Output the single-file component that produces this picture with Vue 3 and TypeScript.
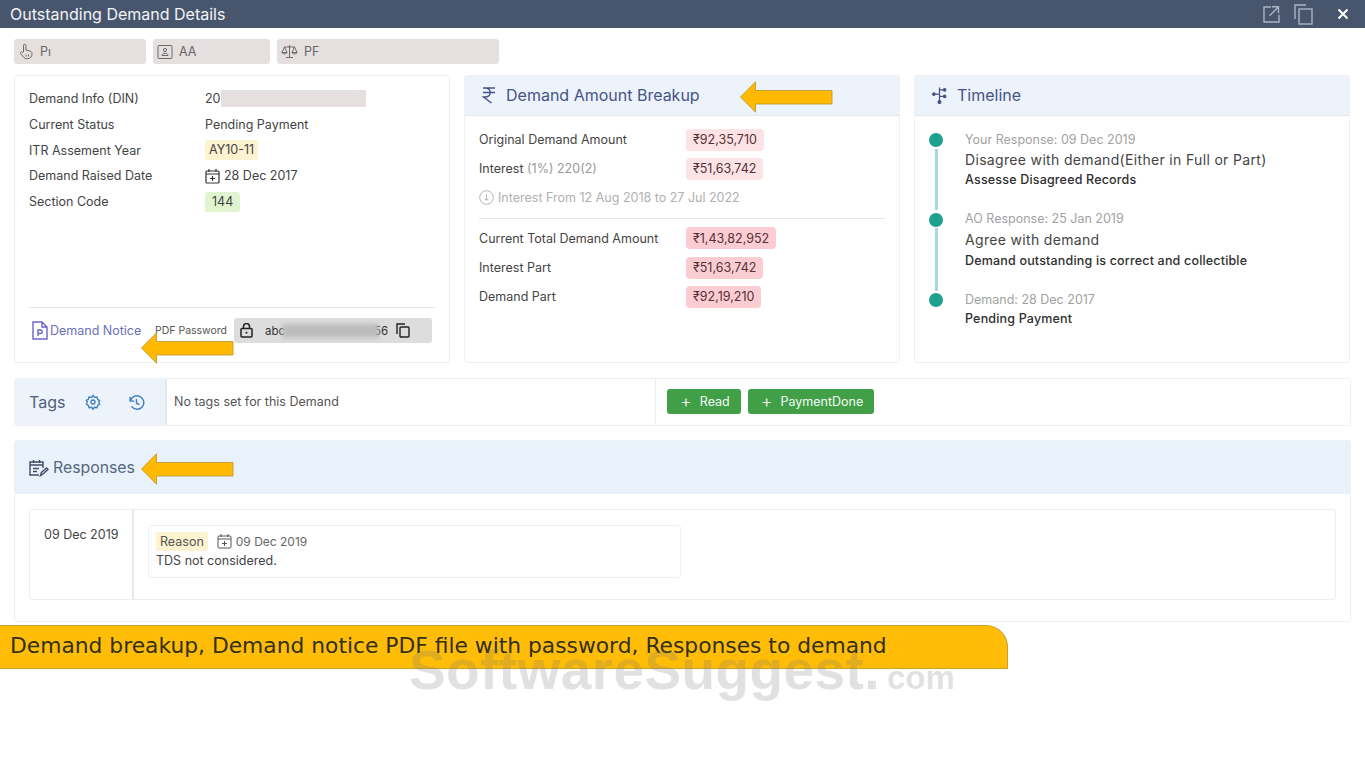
<script setup lang="ts">
const infoRows = [
  { label: "Demand Info (DIN)", kind: "din", value: "20" },
  { label: "Current Status", kind: "text", value: "Pending Payment" },
  { label: "ITR Assement Year", kind: "ay", value: "AY10-11" },
  { label: "Demand Raised Date", kind: "date", value: "28 Dec 2017" },
  { label: "Section Code", kind: "code", value: "144" },
];

const breakupTop = [
  { label: "Original Demand Amount", note: "", value: "₹92,35,710" },
  { label: "Interest", note: "(1%) 220(2)", value: "₹51,63,742" },
];

const breakupBottom = [
  { label: "Current Total Demand Amount", value: "₹1,43,82,952" },
  { label: "Interest Part", value: "₹51,63,742" },
  { label: "Demand Part", value: "₹92,19,210" },
];

const arrows = [
  { x: 740, y: 81 },
  { x: 141, y: 332 },
  { x: 141, y: 453 },
];
</script>

<template>
  <div class="page">
    <header class="titlebar">
      <span class="title">Outstanding Demand Details</span>
      <div class="win-icons">
        <svg width="20" height="20" viewBox="0 0 20 20" fill="none" stroke="#aab4c2" stroke-width="1.4">
          <path d="M10 3H3v15h15v-7M11 2.800h6.500v6.500M17.300 3L8.500 11.800" />
        </svg>
        <svg width="20" height="22" viewBox="0 0 20 22" fill="none" stroke="#aab4c2" stroke-width="1.4">
          <path d="M2 16V2h11" />
          <rect x="6" y="6" width="13" height="15" />
        </svg>
        <svg class="close" width="12" height="12" viewBox="0 0 12 12" stroke="#ffffff" stroke-width="2">
          <path d="M1.500 1.500l9 9M10.500 1.500l-9 9" />
        </svg>
      </div>
    </header>

    <div class="chips">
      <div class="chip chip-a">
        <svg width="16" height="17" viewBox="0 0 16 17" fill="none" stroke="#6a6a6a" stroke-width="1">
          <path d="M5.500 9V2.500a1.200 1.200 0 0 1 2.400 0V7l4.300 1.200c1.200.4 1.800 1.300 1.800 2.500 0 2.800-1.500 5-4.500 5-2.500 0-3.500-.8-4.700-2.500L2.500 10.500c-.6-1 .8-2 1.600-1.200z" />
          <path d="M8 11.500v2M10.500 11.500v2" />
        </svg>
        <span>Pı</span>
      </div>
      <div class="chip chip-b">
        <svg width="16" height="16" viewBox="0 0 16 16" fill="none" stroke="#6a6a6a" stroke-width="1">
          <rect x="1" y="1.500" width="14" height="13" rx="1" />
          <circle cx="8" cy="6" r="1.600" />
          <path d="M5 11.500c0-3 6-3 6 0z" />
        </svg>
        <span>AA</span>
      </div>
      <div class="chip chip-c">
        <svg width="17" height="15" viewBox="0 0 17 15" fill="none" stroke="#6a6a6a" stroke-width="1">
          <path d="M8.500 1v12M5 13.500h7M3 3h11M3.500 3L1 8.500c.5 2 4.500 2 5 0zM13.500 3L11 8.500c.5 2 4.500 2 5 0zM1 8.500h5M11 8.500h5" />
        </svg>
        <span>PF</span>
      </div>
    </div>

    <div class="cards">
      <section class="card info-card">
        <div class="info-rows">
          <div v-for="row in infoRows" :key="row.label" class="info-row">
            <span class="info-label">{{ row.label }}</span>
            <span v-if="row.kind === 'din'" class="din">
              {{ row.value }}<i class="redact"></i>
            </span>
            <span v-else-if="row.kind === 'ay'" class="pill pill-yellow">{{ row.value }}</span>
            <span v-else-if="row.kind === 'code'" class="pill pill-green">{{ row.value }}</span>
            <span v-else-if="row.kind === 'date'" class="date">
              <svg width="15" height="16" viewBox="0 0 15 16" fill="none" stroke="#333" stroke-width="1.200">
                <rect x="1" y="3" width="13" height="12" rx="1" />
                <path d="M1 6h13M4 1v3M11 1v3M7.500 8v5M5 10.500h5" />
              </svg>
              {{ row.value }}
            </span>
            <span v-else>{{ row.value }}</span>
          </div>
        </div>
        <div class="notice-row">
          <a class="notice-link">
            <svg width="16" height="19" viewBox="0 0 16 19" fill="none" stroke="#6c63c7" stroke-width="1.400">
              <path d="M1 1h9l5 5v12H1zM10 1v5h5" />
              <path d="M6 15V9h2.500a1.600 1.600 0 0 1 0 3.500H6" />
            </svg>
            Demand Notice
          </a>
          <span class="pdf-label">PDF Password</span>
          <div class="password">
            <svg width="13" height="15" viewBox="0 0 13 15" fill="none" stroke="#222" stroke-width="1.500">
              <rect x="1" y="5.500" width="11" height="8.500" rx="1" />
              <path d="M3.500 5.500V3.500a3 3 0 0 1 6 0v2" />
              <circle cx="6.500" cy="9.800" r="1" fill="#222" stroke="none" />
            </svg>
            <span class="pw-text">abc<i class="pw-blur"></i>56</span>
            <svg width="14" height="15" viewBox="0 0 14 15" fill="none" stroke="#222" stroke-width="1.400">
              <path d="M1 11V1h8" />
              <rect x="4" y="4" width="9" height="10" rx="1" />
            </svg>
          </div>
        </div>
      </section>

      <section class="card">
        <div class="card-head">
          <svg width="14" height="18" viewBox="0 0 14 18" fill="none" stroke="#46538a" stroke-width="1.500">
            <path d="M1 2h12M1 6.500h12M3 2c7 0 7 9 0 9H1.500l8 6" />
          </svg>
          <span>Demand Amount Breakup</span>
        </div>
        <div class="breakup">
          <div v-for="row in breakupTop" :key="row.label" class="amount-row">
            <span class="amount-label">{{ row.label }} <em v-if="row.note">{{ row.note }}</em></span>
            <span class="amount amount-light">{{ row.value }}</span>
          </div>
          <div class="interest-note">
            <svg width="15" height="15" viewBox="0 0 15 15" fill="none" stroke="#b5b5b5" stroke-width="1">
              <circle cx="7.500" cy="7.500" r="6.800" />
              <path d="M7.500 4v6M5.500 8.500l2 2 2-2" />
            </svg>
            Interest From 12 Aug 2018 to 27 Jul 2022
          </div>
          <hr class="rule" />
          <div v-for="row in breakupBottom" :key="row.label" class="amount-row">
            <span class="amount-label">{{ row.label }}</span>
            <span class="amount amount-dark">{{ row.value }}</span>
          </div>
        </div>
      </section>

      <section class="card">
        <div class="card-head">
          <svg width="15" height="19" viewBox="0 0 16 19" fill="none" stroke="#46538a" stroke-width="1.300">
            <path d="M8 1v16M1.500 8H8M8 3.500h5M8 10.500h5" />
            <circle cx="2" cy="8" r="1.300" fill="#46538a" />
            <circle cx="13.500" cy="3.500" r="1.300" fill="#46538a" />
            <circle cx="13.500" cy="10.500" r="1.300" fill="#46538a" />
            <circle cx="8" cy="16.500" r="1.500" fill="#46538a" />
          </svg>
          <span>Timeline</span>
        </div>
        <div class="timeline">
          <div class="tl-item tl-line">
            <span class="dot"></span>
            <div>
              <div class="tl-when">Your Response: 09 Dec 2019</div>
              <div class="tl-main">Disagree with demand(Either in Full or Part)</div>
              <div class="tl-sub">Assesse Disagreed Records</div>
            </div>
          </div>
          <div class="tl-item tl-line">
            <span class="dot"></span>
            <div>
              <div class="tl-when">AO Response: 25 Jan 2019</div>
              <div class="tl-main">Agree with demand</div>
              <div class="tl-sub">Demand outstanding is correct and collectible</div>
            </div>
          </div>
          <div class="tl-item">
            <span class="dot"></span>
            <div>
              <div class="tl-when">Demand: 28 Dec 2017</div>
              <div class="tl-sub tl-sub-last">Pending Payment</div>
            </div>
          </div>
        </div>
      </section>
    </div>

    <section class="tags">
      <div class="tags-head">
        <span class="tags-title">Tags</span>
        <svg width="16" height="16" viewBox="0 0 24 24" fill="none" stroke="#3f7fc4" stroke-width="2">
          <circle cx="12" cy="12" r="3" />
          <path d="M12 2l2 3 4-.5 1 3.500 3 2-1.500 2.500 1.500 2.500-3 2-1 3.500-4-.5-2 3-2-3-4 .5-1-3.500-3-2L3.500 12 2 9.500l3-1.500 1-3.500 4 .5z" />
        </svg>
        <svg class="hist" width="17" height="17" viewBox="0 0 24 24" fill="none" stroke="#3f7fc4" stroke-width="2">
          <path d="M3 4v6h6M3.500 10A9.500 9.500 0 1 1 5 17.500M12 7v6l4 2" />
        </svg>
      </div>
      <div class="tags-empty">No tags set for this Demand</div>
      <div class="tags-actions">
        <button class="add-btn"><span class="plus">+</span>Read</button>
        <button class="add-btn"><span class="plus">+</span>PaymentDone</button>
      </div>
    </section>

    <section class="responses">
      <div class="responses-head">
        <svg width="20" height="18" viewBox="0 0 20 18" fill="none" stroke="#3d4d66" stroke-width="1.400">
          <path d="M14 9V3H1v13h9M1 6h13M4.500 1v3M10.500 1v3M4 9.500h6M4 12.500h4" />
          <path d="M11.500 16.500l1-3 5-4.500 1.500 1.500-5 4.500z" />
        </svg>
        <span>Responses</span>
      </div>
      <div class="responses-body">
        <div class="resp-box">
          <div class="resp-date">09 Dec 2019</div>
          <div class="resp-main">
            <div class="reason-card">
              <div class="reason-top">
                <span class="reason-tag">Reason</span>
                <svg width="15" height="16" viewBox="0 0 15 16" fill="none" stroke="#555" stroke-width="1">
                  <rect x="1" y="3" width="13" height="12" rx="1" />
                  <path d="M1 6h13M4 1v3M11 1v3M7.500 8v5M5 10.500h5" />
                </svg>
                <span class="reason-date">09 Dec 2019</span>
              </div>
              <div class="reason-text">TDS not considered.</div>
            </div>
          </div>
        </div>
      </div>
    </section>

    <div class="banner">Demand breakup, Demand notice PDF file with password, Responses to demand</div>
    <div class="watermark">SoftwareSuggest.<span>com</span></div>

    <svg
      v-for="a in arrows"
      :key="a.y"
      class="arrow"
      :style="{ left: a.x + 'px', top: a.y + 'px' }"
      width="93"
      height="32"
      viewBox="0 0 93 32"
    >
      <path d="M0.500 16L15.500 0.800V9.500H92V23H15.500V31.200z" fill="#ffb900" stroke="#b8942a" stroke-width="0.800" />
    </svg>
  </div>
</template>

<style scoped>
.page {
  position: relative;
  width: 1365px;
  height: 768px;
  overflow: hidden;
  background: #fff;
  font-family: Inter, "Liberation Sans", sans-serif;
  font-size: 12.500px;
  color: #444;
}

.titlebar {
  height: 28px;
  background: #47566c;
  display: flex;
  align-items: center;
  justify-content: space-between;
  padding: 0 16px 0 10px;
}

.title {
  color: #f2f4f7;
  font-size: 16px;
}

.win-icons {
  display: flex;
  align-items: center;
  gap: 12px;
}

.close {
  margin-left: 12px;
}

.chips {
  display: flex;
  gap: 7px;
  padding: 11px 14px 0;
}

.chip {
  height: 25px;
  box-sizing: border-box;
  background: #e6dfdf;
  border-radius: 3px;
  display: flex;
  align-items: center;
  gap: 6px;
  padding-left: 4px;
  color: #666;
  font-size: 12.500px;
}

.chip-a {
  width: 132px;
}

.chip-b {
  width: 117px;
}

.chip-c {
  width: 222px;
}

.cards {
  display: grid;
  grid-template-columns: 436px 436px 436px;
  gap: 14px;
  padding: 11px 14px 0;
}

.card {
  height: 288px;
  box-sizing: border-box;
  border: 1px solid #eef0f3;
  border-radius: 3px;
  background: #fff;
}

.info-card {
  display: flex;
  flex-direction: column;
  justify-content: space-between;
  padding: 10px 14px 19px;
}

.info-row {
  display: grid;
  grid-template-columns: 176px 1fr;
  align-items: center;
  height: 25.700px;
}

.din {
  display: flex;
  align-items: center;
}

.redact {
  width: 145px;
  height: 17px;
  background: #e6dfdf;
}

.pill {
  justify-self: start;
  border-radius: 3px;
  padding: 3px 4px;
  line-height: 14px;
}

.pill-yellow {
  background: #fdf3d0;
}

.pill-green {
  background: #dff5cf;
  padding: 3px 7px;
}

.date {
  display: flex;
  align-items: center;
  gap: 4px;
}

.notice-row {
  border-top: 1px solid #e8e8e8;
  display: flex;
  align-items: center;
  padding-top: 10px;
  padding-left: 3px;
}

.notice-link {
  display: flex;
  align-items: center;
  gap: 2px;
  color: #6a6fb8;
  width: 123px;
}

.pdf-label {
  font-size: 10.500px;
  color: #555;
  width: 79px;
}

.password {
  width: 198px;
  height: 25px;
  background: #dddddd;
  border-radius: 3px;
  display: flex;
  align-items: center;
  padding-left: 6px;
  box-sizing: border-box;
  color: #333;
  font-size: 11.500px;
}

.pw-text {
  display: flex;
  align-items: center;
  margin-left: 12px;
  margin-right: 8px;
}

.pw-blur {
  width: 97px;
  height: 14px;
  background: #bdbdbd;
  filter: blur(2px);
  margin-left: -3px;
  margin-right: -5px;
  position: relative;
}

.card-head {
  height: 38px;
  padding-bottom: 1px;
  background: #edf3fb;
  border-bottom: 1px solid #e4e6ea;
  display: flex;
  align-items: center;
  gap: 10px;
  padding-left: 17px;
  color: #46538a;
  font-size: 16px;
}

.breakup {
  padding: 9px 14px 0;
}

.amount-row {
  display: grid;
  grid-template-columns: 207px 1fr;
  align-items: center;
  height: 29.300px;
}

.amount-label em {
  font-style: normal;
  color: #999;
}

.amount {
  justify-self: start;
  border-radius: 4px;
  padding: 3.500px 7px;
  line-height: 15px;
  color: #553034;
}

.amount-light {
  background: #fde3e5;
}

.amount-dark {
  background: #fbcdd3;
}

.interest-note {
  display: flex;
  align-items: center;
  gap: 4px;
  height: 28px;
  color: #b0b0b0;
}

.rule {
  border: 0;
  border-top: 1px solid #e6e6e6;
  margin: 6px 0 5px;
}

.timeline {
  padding: 15px 14px 0;
}

.tl-item {
  position: relative;
  display: grid;
  grid-template-columns: 36px 1fr;
  height: 80px;
}

.tl-item:first-child {
  height: 79px;
}

.tl-item:nth-child(2) {
  height: 81px;
}

.tl-item:nth-child(2) .dot {
  margin-top: 3px;
}

.tl-item:nth-child(2) .tl-main {
  margin-top: 1px;
}

.tl-item:nth-child(2) .tl-sub {
  margin-top: 1px;
}

.tl-line::after {
  content: "";
  position: absolute;
  left: 6px;
  top: 18px;
  bottom: 0;
  width: 3px;
  background: #a5d8d8;
}

.dot {
  width: 14px;
  height: 14px;
  margin-top: 2px;
  border-radius: 50%;
  background: #1fa08e;
}

.tl-when {
  color: #a2a2a2;
  line-height: 17px;
}

.tl-main {
  font-size: 14px;
  color: #444;
  line-height: 24px;
  letter-spacing: 0.330px;
}

.tl-sub {
  color: #2e2e2e;
  line-height: 16px;
  font-weight: 500;
  letter-spacing: 0.180px;
}

.tl-sub-last {
  margin-top: 3px;
}

.tags {
  display: flex;
  height: 48px;
  box-sizing: border-box;
  margin: 15px 14px 0;
  border: 1px solid #eef0f3;
  border-radius: 3px;
}

.tags-head {
  width: 152px;
  background: #edf3fb;
  border-right: 2px solid #e4e8ee;
  display: flex;
  align-items: center;
  padding-left: 14px;
  box-sizing: border-box;
}

.tags-title {
  color: #4e6078;
  font-size: 16px;
  margin-right: 20px;
}

.hist {
  margin-left: 27px;
}

.tags-empty {
  width: 489px;
  padding: 0 0 2px 7px;
  box-sizing: border-box;
  display: flex;
  align-items: center;
  border-right: 1px solid #eeeeee;
  color: #555;
}

.tags-actions {
  display: flex;
  align-items: center;
  gap: 7px;
  padding: 0 0 2px 11px;
}

.add-btn {
  height: 25px;
  border: 0;
  border-radius: 3px;
  background: #41a047;
  color: #f4fbf4;
  font-family: inherit;
  font-size: 12.500px;
  padding: 0 11px 0 13px;
  display: flex;
  align-items: center;
}

.plus {
  font-size: 18px;
  font-weight: 300;
  margin-right: 8px;
}

.responses {
  height: 182px;
  box-sizing: border-box;
  margin: 14px 14px 0;
  border: 1px solid #eef0f3;
  border-radius: 3px;
}

.responses-head {
  height: 53px;
  background: #e9f2fb;
  display: flex;
  align-items: center;
  gap: 4px;
  padding-left: 14px;
  color: #56687f;
  font-size: 15.800px;
}

.responses-body {
  padding: 15px 14px 0;
}

.resp-box {
  display: flex;
  height: 91px;
  box-sizing: border-box;
  border: 1px solid #eceef1;
  border-radius: 3px;
}

.resp-date {
  width: 104px;
  padding: 17px 0 0 14px;
  box-sizing: border-box;
  border-right: 2px solid #e6e8ec;
  color: #444;
}

.resp-main {
  padding: 15px 14px;
}

.reason-card {
  width: 533px;
  height: 53px;
  box-sizing: border-box;
  border: 1px solid #eef0f3;
  border-radius: 3px;
  padding: 5px 7px;
}

.reason-top {
  display: flex;
  align-items: center;
  gap: 3px;
  height: 20px;
}

.reason-tag {
  background: #fdf3d0;
  padding: 2px 4px;
  margin-right: 6px;
  border-radius: 3px;
  color: #555;
}

.reason-date {
  color: #666;
  font-size: 12px;
  margin-left: 1px;
}

.reason-text {
  color: #444;
  margin-top: 2px;
}

.banner {
  position: absolute;
  left: 0;
  top: 625px;
  width: 1008px;
  height: 44px;
  box-sizing: border-box;
  padding-left: 10px;
  background: #ffbd08;
  border: 1px solid #c9a22e;
  border-left: 0;
  border-top-right-radius: 22px;
  font-family: "DejaVu Sans", sans-serif;
  font-size: 21.800px;
  line-height: 40px;
  color: #33301c;
}

.watermark {
  position: absolute;
  left: 409px;
  top: 640px;
  font-family: "Liberation Sans", sans-serif;
  font-weight: 700;
  font-size: 55px;
  letter-spacing: 0.400px;
  line-height: 60px;
  color: rgba(120, 120, 120, 0.22);
  white-space: nowrap;
}

.watermark span {
  font-size: 33px;
  letter-spacing: 0;
  margin-left: 7px;
}

.arrow {
  position: absolute;
}
</style>
